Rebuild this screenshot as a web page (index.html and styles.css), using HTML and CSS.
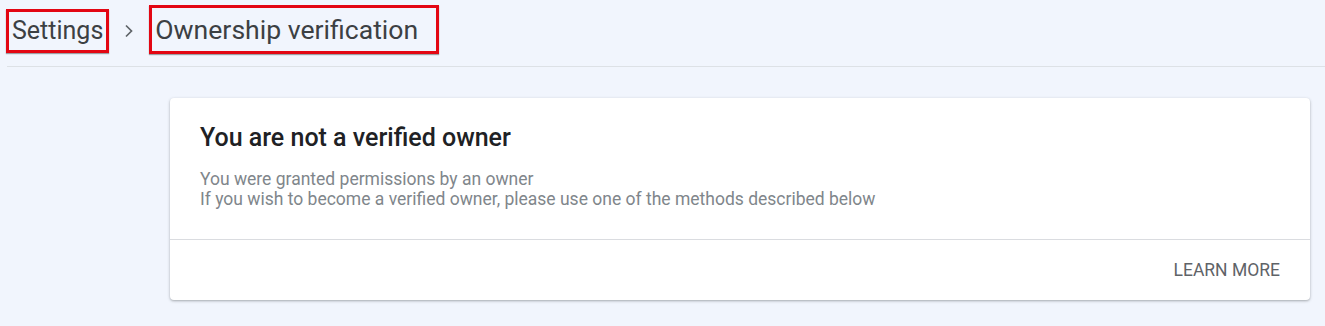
FILE: index.html
```html
<!DOCTYPE html>
<html>
<head>
<meta charset="utf-8">
<link rel="stylesheet" href="styles.css">
</head>
<body>
<header class="topbar">
  <nav class="crumbs">
    <span class="crumb crumb-first">Settings</span>
    <span class="chev">
      <svg width="12" height="14" viewBox="0 0 12 14"><path d="M3 1.5 L8.5 7 L3 12.5" fill="none" stroke="#5f6368" stroke-width="1.7"/></svg>
    </span>
    <span class="crumb crumb-current">Ownership verification</span>
  </nav>
</header>
<main class="content">
  <section class="card">
    <div class="card-body">
      <h1 class="card-title">You are not a verified owner</h1>
      <p class="card-text">You were granted permissions by an owner<br>If you wish to become a verified owner, please use one of the methods described below</p>
    </div>
    <div class="card-actions">
      <span class="btn-text">LEARN MORE</span>
    </div>
  </section>
</main>
</body>
</html>
```
FILE: styles.css
```css
html, body {
  margin: 0;
  padding: 0;
  background: #f1f5fd;
  font-family: Roboto, "Liberation Sans", Arial, sans-serif;
}
.topbar {
  margin-left: 7px;
  height: 67px;
  border-bottom: 1px solid #dde1e6;
  box-sizing: border-box;
}
.crumbs {
  display: flex;
  align-items: flex-start;
  padding-top: 5px;
  color: #3c4043;
}
.crumb {
  line-height: 43px;
  border: 3.5px solid #e30613;
  box-shadow: 0 1px 1px rgba(0,0,0,0.35);
}
.crumb-first {
  font-size: 25px;
  margin-top: 4px;
  margin-left: -1px;
  padding: 0 3px 0 3px;
  line-height: 38px;
}
.chev {
  display: flex;
  align-items: center;
  height: 52px;
  margin: 0 14px 0 14px;
}
.chev svg { display: block; }
.crumb-current {
  font-size: 26.6px;
  padding: 0 18px 0 3px;
}
.content {
  padding: 31px 15px 26px 170px;
}
.card {
  background: #fff;
  border-radius: 4px;
  box-shadow: 0 1px 3px rgba(60,64,67,0.3), 0 1px 2px rgba(60,64,67,0.15);
}
.card-body {
  padding: 25px 30px 30px 30px;
  border-bottom: 1px solid #dadce0;
}
.card-title {
  margin: 0 0 16px 0;
  font-size: 25px;
  font-weight: 500;
  line-height: 30px;
  color: #202124;
}
.card-text {
  margin: 0;
  font-size: 17.5px;
  line-height: 20px;
  color: #80868b;
}
.card-actions {
  display: flex;
  justify-content: flex-end;
  padding: 19px 30px 19px 30px;
}
.btn-text {
  font-size: 17.5px;
  line-height: 22px;
  color: #5f6368;
}
```
